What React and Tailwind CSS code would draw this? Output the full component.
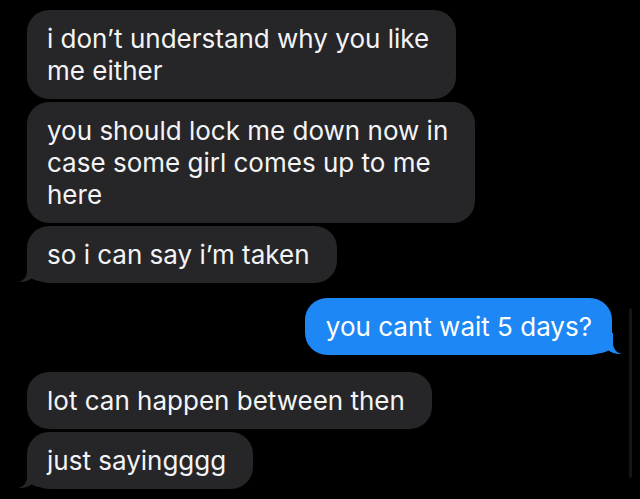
import React from 'react';

const font = { fontFamily: 'Inter, "Noto Sans", sans-serif' };

const TailLeft = () => (
  <svg className="absolute -left-[9px] bottom-0" width="26" height="22" viewBox="0 0 26 22">
    <path d="M9 0 L9 10 C9 16 5 20 0 21 C6 21.5 10 20 13.5 17.5 C17 19.5 21 20.5 26 20.5 L26 0 Z" fill="#262628" />
  </svg>
);

const TailRight = () => (
  <svg className="absolute -right-[10px] bottom-0" width="26" height="22" viewBox="0 0 26 22">
    <path d="M17 0 L17 10 C17 16 21 20 26 21 C20 21.5 16 20 12.5 17.5 C9 19.5 5 20.5 0 20.5 L0 0 Z" fill="#1c87f5" />
  </svg>
);

const Received = ({ children, tail }) => (
  <div className="relative self-start rounded-[22px] bg-[#262628] pl-5 pr-[27px] pt-[13px] pb-3 text-[26px] leading-[32px] text-[#f4f4f6]">
    {tail && <TailLeft />}
    <span className="relative">{children}</span>
  </div>
);

export default function App() {
  return (
    <div className="relative w-[640px] h-[499px] bg-black overflow-hidden pl-[27px] pr-[28px] pt-[10px]" style={font}>
      <div className="flex flex-col gap-[3px]">
        <Received>i don’t understand why you like<br />me either</Received>
        <Received>you should lock me down now in<br />case some girl comes up to me<br />here</Received>
        <Received tail>so i can say i’m taken</Received>
      </div>

      <div className="flex justify-end mt-[15px]">
        <div className="relative rounded-[22px] bg-[#1c87f5] pl-[21px] pr-5 pt-[13px] pb-3 text-[26px] leading-[32px] text-white">
          <TailRight />
          <span className="relative">you cant wait 5 days?</span>
        </div>
      </div>

      <div className="flex flex-col gap-[3px] mt-[17px]">
        <Received>lot can happen between then</Received>
        <Received tail>just sayingggg</Received>
      </div>

      {/* scroll indicator */}
      <div className="absolute left-[629px] top-[308px] w-[3px] h-[170px] rounded-full bg-[#151515]" />
    </div>
  );
}
